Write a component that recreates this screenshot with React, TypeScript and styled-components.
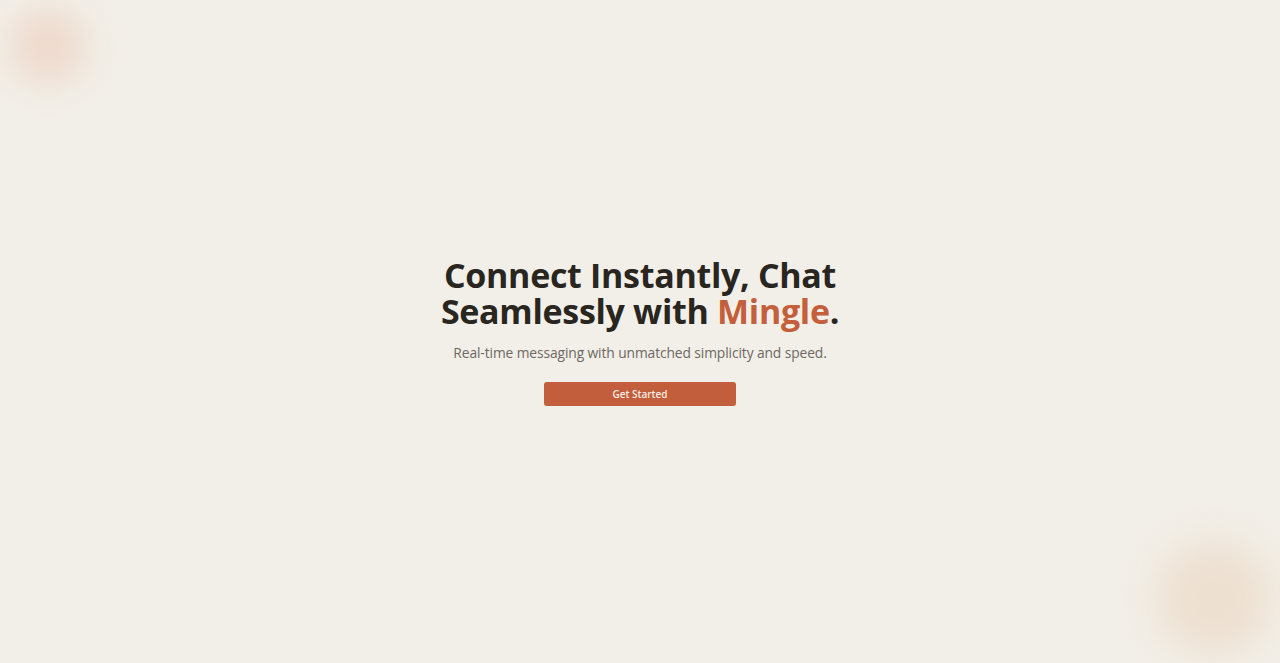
import React from "react";
import styled, { createGlobalStyle } from "styled-components";

const GlobalStyle = createGlobalStyle`
  html, body {
    margin: 0;
    padding: 0;
    background: #f2efe8;
  }
  body {
    font-family: "Open Sans", "Noto Sans", "Liberation Sans", sans-serif;
    -webkit-font-smoothing: antialiased;
  }
`;

const Page = styled.div`
  position: relative;
  overflow: hidden;
  background: #f2efe8;
  color: #29261f;
`;

const Hero = styled.section`
  position: relative;
  height: 663px;
  display: flex;
  flex-direction: column;
  align-items: center;
  justify-content: center;
  text-align: center;
`;

const Blob = styled.div<{ $size: number; $color: string; $blur: number }>`
  position: absolute;
  width: ${(p) => p.$size}px;
  height: ${(p) => p.$size}px;
  border-radius: 50%;
  background: ${(p) => p.$color};
  filter: blur(${(p) => p.$blur}px);
  pointer-events: none;
`;

const TopBlob = styled(Blob)`
  left: 10px;
  top: 8px;
`;

const BottomBlob = styled(Blob)`
  right: 8px;
  top: 540px;
`;

const Title = styled.h1`
  margin: 0;
  font-size: 34px;
  line-height: 36px;
  font-weight: 700;
  letter-spacing: -0.3px;
  color: #29261f;
`;

const Accent = styled.span`
  color: #c45f3c;
`;

const Subtitle = styled.p`
  margin: 14px 0 0;
  font-size: 13.8px;
  font-weight: 400;
  color: #6d6862;
  letter-spacing: -0.1px;
`;

const CTA = styled.button`
  margin-top: 20px;
  width: 192px;
  height: 24px;
  border: none;
  border-radius: 3px;
  background: #c25e3b;
  color: #f7ece6;
  font-family: inherit;
  font-size: 10px;
  font-weight: 600;
  cursor: pointer;
`;

export default function App() {
  return (
    <Page>
      <GlobalStyle />
      <Hero>
        <TopBlob $size={76} $color="#eedacd" $blur={16} />
        <BottomBlob $size={116} $color="#ede0d1" $blur={18} />
        <Title>
          Connect Instantly, Chat
          <br />
          Seamlessly with <Accent>Mingle</Accent>.
        </Title>
        <Subtitle>Real-time messaging with unmatched simplicity and speed.</Subtitle>
        <CTA>Get Started</CTA>
      </Hero>
    </Page>
  );
}
